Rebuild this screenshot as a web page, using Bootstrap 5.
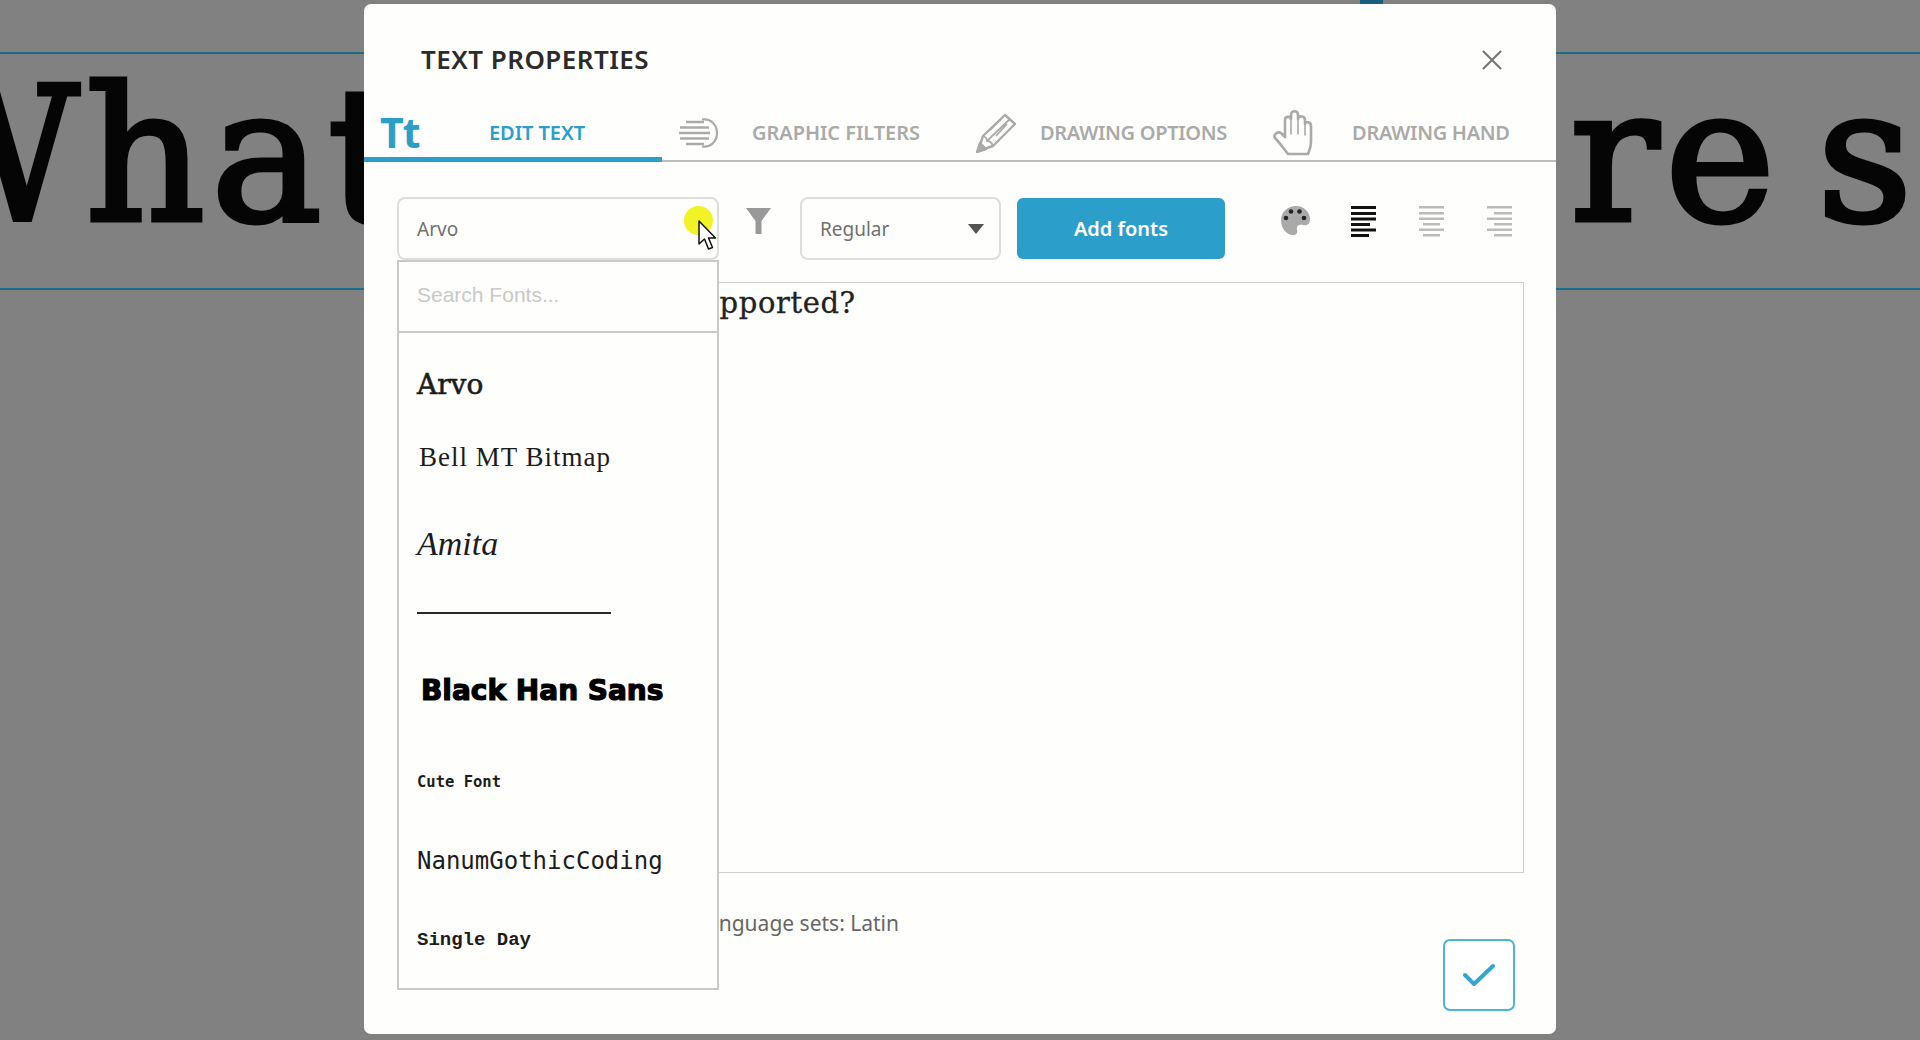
<!DOCTYPE html>
<html lang="en">
<head>
<meta charset="utf-8">
<title>Text properties</title>
<link rel="stylesheet" href="https://cdn.jsdelivr.net/npm/bootstrap@5.3.0/dist/css/bootstrap.min.css">
<style>
html,body{height:100%;}
body{background:#818181;overflow:hidden;position:relative;font-family:"Noto Sans",sans-serif;}
.stage-band{margin-top:52px;height:238px;border-top:2px solid #1b6c88;border-bottom:2px solid #1b6c88;overflow:hidden;white-space:nowrap;color:#050505;font-family:"DejaVu Serif",serif;font-size:186px;line-height:204px;letter-spacing:6px;-webkit-text-stroke:5px #050505;}
.stage-left{margin-left:-112px;width:1682px;flex:none;overflow:hidden;}
.stage-right{flex:none;word-spacing:-29px;}
.top-blob{position:absolute;left:1360px;top:0;width:23px;height:4px;background:#1b5f80;}
.tp-modal{position:absolute;left:364px;top:4px;width:1192px;height:1030px;background:#fefefd;border:0;border-radius:7px;}
.tp-head{height:88px;padding:22px 0 0 57px;border:0;}
.tp-title{font-size:26px;font-weight:600;color:#2b2b2b;margin:0;line-height:1;letter-spacing:.47px;}
.tp-close{margin:2px 53px 0 0;width:22px;height:22px;}
.tp-tabs{height:70px;border-bottom:2px solid #bdbdbd;flex-wrap:nowrap;}
.tp-tab{display:flex;align-items:center;height:70px;padding:11px 0 0;color:#aaa;font-size:20px;font-weight:600;white-space:nowrap;letter-spacing:-.05px;}
.tp-tab.is-on{width:298px;padding:16px 0 0 16px;color:#2b9fc9;border-bottom:5px solid #2b9fc9;}
.tp-tt{font-size:41px;font-weight:700;width:41px;line-height:1;margin-right:68px;font-family:"Open Sans",sans-serif;letter-spacing:-1px;}
.tab-two{margin-left:16px;}.tab-two svg{margin-right:34px;}
.tab-three{margin-left:56px;letter-spacing:-.3px;}.tab-three svg{margin-right:24px;}
.tab-four{margin-left:46px;letter-spacing:-.3px;}.tab-four svg{margin-right:38px;}
.tp-body{padding:35px 0 0 33px;}
.tp-field{height:63px;border:2px solid #ddd;border-radius:8px;color:#707070;font-size:19px;display:flex;align-items:center;padding:1px 18px 0;background:transparent;position:relative;flex:none;}
.field-font{width:322px;}
.field-style{width:201px;margin-left:29px;justify-content:space-between;padding-right:15px;}
.tri-down{width:0;height:0;border-left:8px solid transparent;border-right:8px solid transparent;border-top:10px solid #555;}
.filter-ico{margin:11px 0 0 27px;flex:none;}
.tp-add{width:208px;height:61px;margin:1px 0 0 16px;background:#2b9fc9;border:0;border-radius:6px;color:#fff;font-size:20px;font-weight:600;padding:0;flex:none;}
.tool-ico{flex:none;margin-top:9px;}
.ico-pal{margin-left:56px;}.ico-a1{margin-left:40px;}.ico-a2,.ico-a3{margin-left:43px;}
.tp-editor{width:1127px;height:591px;margin-top:22px;border:1px solid #cfcfcf;font-family:"DejaVu Serif",serif;font-size:29px;color:#222;padding:1px 0 0 51px;line-height:38px;white-space:nowrap;letter-spacing:.6px;-webkit-text-stroke:.3px #222;}
.tp-foot{width:1127px;position:relative;}
.tp-lang{font-size:21px;color:#666;padding:35px 0 0 0;line-height:30px;width:502px;text-align:right;white-space:nowrap;}
.tp-ok{position:absolute;right:9px;top:66px;width:72px;height:72px;background:#fff;border:2px solid #4cb4d6;border-radius:7px;padding:0;display:flex;align-items:center;justify-content:center;}
.hl-dot{position:absolute;left:285px;top:7px;width:29px;height:29px;border-radius:50%;background:#f2f226;}
.hl-cursor{position:absolute;left:299px;top:21px;}
.font-menu{position:absolute;left:33px;top:256px;width:322px;height:730px;background:#fefefd;border:2px solid #c9c9c9;z-index:5;}
.font-search{height:71px;border:0;border-bottom:2px solid #c9c9c9;border-radius:0;padding:0 18px 4px;font-family:"Liberation Sans",sans-serif;font-size:21px;background:transparent;}
.font-search::placeholder{color:#c9c9c9;}
.font-list{padding:30px 0 0 18px;margin:0;list-style:none;color:#1c1c1c;}
.font-row{height:44px;line-height:44px;white-space:nowrap;}
.f-arvo{font-family:"DejaVu Serif",serif;font-size:28px;-webkit-text-stroke:.6px #1c1c1c;}
.f-bell{font-family:"Liberation Serif",serif;font-size:27px;margin-top:28px;padding-left:2px;letter-spacing:1px;}
.f-amita{font-family:"Liberation Serif",serif;font-style:italic;font-size:34px;margin-top:43px;}
.f-line{margin-top:26px;padding-top:20px;}
.f-line span{display:block;width:194px;border-top:2px solid #2a2a2a;}
.f-black{font-family:"DejaVu Sans",sans-serif;font-weight:700;font-size:28px;margin-top:33px;padding-left:4px;color:#000;-webkit-text-stroke:1.2px #000;}
.f-cute{font-family:"DejaVu Sans Mono",monospace;font-size:15.500px;font-weight:700;margin-top:47px;}
.f-nanum{font-family:"DejaVu Sans Mono",monospace;font-size:24px;margin-top:35px;}
.f-single{font-family:"Liberation Mono",monospace;font-weight:700;font-size:19px;margin-top:35px;}
</style>
</head>
<body>
<div class="stage-band d-flex"><span class="stage-left">What fonts are</span><span class="stage-right">re supported?</span></div>
<div class="top-blob"></div>

<div class="modal-content tp-modal d-flex flex-column">
  <div class="modal-header tp-head d-flex justify-content-between align-items-center">
    <h5 class="tp-title">TEXT PROPERTIES</h5>
    <svg class="tp-close" viewBox="0 0 22 22" fill="none" stroke="#777" stroke-width="2.2"><path d="M2 2 20 20M20 2 2 20"/></svg>
  </div>

  <div class="nav tp-tabs">
    <div class="tp-tab is-on"><span class="tp-tt">Tt</span>EDIT TEXT</div>
    <div class="tp-tab tab-two">
      <svg width="40" height="30" viewBox="0 0 40 30" fill="none" stroke="#aaa" stroke-width="2.4"><path d="M8 4H26M2 9.500H31M1 15H32M2 20.500H31M8 26H26"/><path d="M24 1.500C33 0 39 7 39 15S33 30 24 28.500" stroke-width="2.200"/></svg>
      GRAPHIC FILTERS</div>
    <div class="tp-tab tab-three">
      <svg width="40" height="40" viewBox="0 0 40 40" fill="none" stroke="#aaa" stroke-width="2.4" stroke-linejoin="round"><path d="M2 38 7 23 29 2 39 11 17 33Z"/><path d="M7 23C10 24 11 26 11 28C14 28 16 30 17 33M14 17 25 6M20 23 31 11M12 27 34 6" stroke-width="1.800"/><path d="M1 39 4 30 10 36Z" fill="#aaa"/></svg>
      DRAWING OPTIONS</div>
    <div class="tp-tab tab-four">
      <svg width="41" height="46" viewBox="0 0 41 46" fill="none" stroke="#aaa" stroke-width="2.6" stroke-linejoin="round" stroke-linecap="round"><path d="M15 44C11 39 6 32 2 28C0 25 4 21 8 23L12 27V10C12 6 17 6 18 9V5C18 0 25 0 25 5V9C26 5 32 6 32 10V14C33 11 38 12 38 16V32C38 38 36 41 35 44Z"/><path d="M18 9V24M25 9V24M32 14V25" stroke-width="1.600"/></svg>
      DRAWING HAND</div>
  </div>

  <div class="tp-body">
    <div class="d-flex align-items-start">
      <div class="tp-field field-font">Arvo
        <span class="hl-dot"></span>
        <svg class="hl-cursor" width="18" height="31" viewBox="0 0 18 31"><path d="M1 1V24L6.500 19 10.500 29 14.500 27.500 10.500 18H17.500Z" fill="#fff" stroke="#111" stroke-width="1.500" stroke-linejoin="round"/></svg>
      </div>
      <svg class="filter-ico" width="25" height="26" viewBox="0 0 25 26"><path d="M0 0H25L15.500 13V26H9.500V13Z" fill="#999"/></svg>
      <div class="tp-field field-style">Regular<span class="tri-down"></span></div>
      <button type="button" class="btn tp-add">Add fonts</button>
      <svg class="tool-ico ico-pal" width="30" height="29" viewBox="0 0 30 29"><path d="M15 0C23 0 29 6 29 13C29 18 26 20 22 19C18 18 15 20 16 24C17 27 15 29 12 29C5 29 0 22 0 14C0 6 7 0 15 0Z" fill="#aaa"/><g fill="#222"><circle cx="10" cy="5.500" r="2.300"/><circle cx="18.500" cy="5.500" r="2.300"/><circle cx="5" cy="12" r="2.300"/><circle cx="23" cy="12" r="2.300"/></g></svg>
      <svg class="tool-ico ico-a1" width="25" height="31" viewBox="0 0 25 31" fill="#111"><rect y="0" width="25" height="3"/><rect y="6" width="25" height="3"/><rect y="11.500" width="25" height="3"/><rect y="17" width="19" height="3"/><rect y="22.500" width="25" height="3"/><rect y="28" width="18" height="3"/></svg>
      <svg class="tool-ico ico-a2" width="25" height="31" viewBox="0 0 25 31" fill="#bbb"><rect y="0" width="25" height="2.500"/><rect y="6" width="25" height="2.500"/><rect y="11.500" width="25" height="2.500"/><rect x="4" y="17" width="17" height="2.500"/><rect y="22.500" width="25" height="2.500"/><rect x="4" y="28" width="17" height="2.500"/></svg>
      <svg class="tool-ico ico-a3" width="25" height="31" viewBox="0 0 25 31" fill="#bbb"><rect y="0" width="25" height="2.500"/><rect x="7" y="6" width="18" height="2.500"/><rect y="11.500" width="25" height="2.500"/><rect x="7" y="17" width="18" height="2.500"/><rect y="22.500" width="25" height="2.500"/><rect x="7" y="28" width="18" height="2.500"/></svg>
    </div>
    <div class="tp-editor">What fonts are supported?</div>
    <div class="tp-foot">
      <div class="tp-lang">Supported language sets: Latin</div>
      <button type="button" class="btn tp-ok" aria-label="Confirm">
        <svg width="32" height="24" viewBox="0 0 32 24" fill="none" stroke="#35a5cb" stroke-width="4" stroke-linecap="round" stroke-linejoin="round"><path d="M2 12 11 21 30 3"/></svg>
      </button>
    </div>
  </div>

  <div class="font-menu">
    <input class="form-control font-search" placeholder="Search Fonts...">
    <ul class="font-list">
      <li class="font-row f-arvo">Arvo</li>
      <li class="font-row f-bell">Bell MT Bitmap</li>
      <li class="font-row f-amita">Amita</li>
      <li class="font-row f-line"><span></span></li>
      <li class="font-row f-black">Black Han Sans</li>
      <li class="font-row f-cute">Cute Font</li>
      <li class="font-row f-nanum">NanumGothicCoding</li>
      <li class="font-row f-single">Single Day</li>
    </ul>
  </div>
</div>
<script src="https://cdn.jsdelivr.net/npm/bootstrap@5.3.0/dist/js/bootstrap.bundle.min.js"></script>
</body>
</html>
